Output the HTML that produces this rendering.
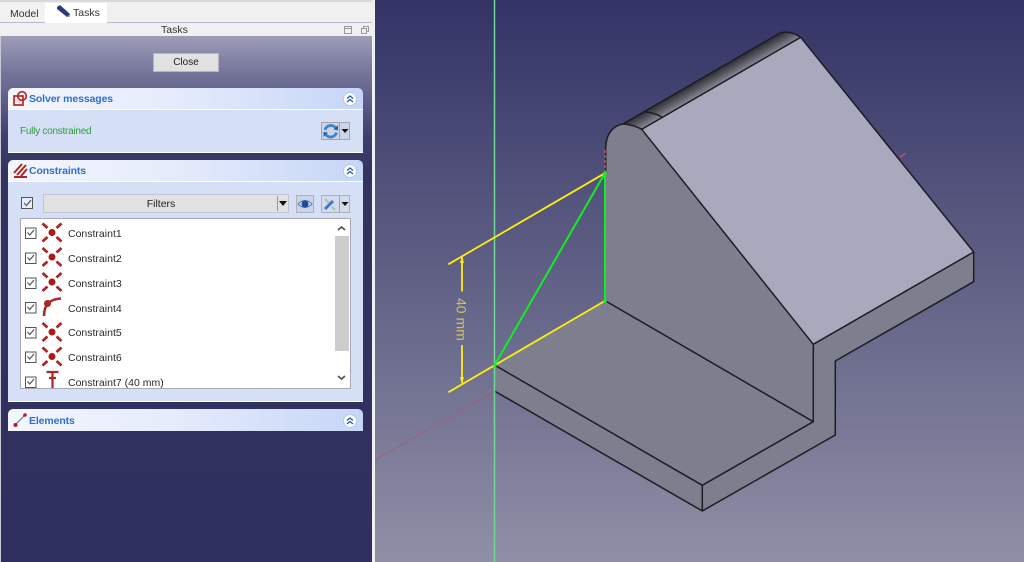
<!DOCTYPE html>
<html><head><meta charset="utf-8"><style>
html,body{margin:0;padding:0}
body{width:1024px;height:562px;overflow:hidden;position:relative;background:#fff;font-family:"Liberation Sans",sans-serif;font-size:10.5px;color:#222}
.a{position:absolute}
.hd{position:absolute;left:8px;width:355px;height:21px;border-radius:5px 5px 0 0;background:linear-gradient(90deg,#f4f6fd 0%,#e6ecfb 45%,#c6d6f7 100%);}
.hd b{position:absolute;left:21px;top:5px;font-size:10.5px;color:#2f6fd0;letter-spacing:-.12px;white-space:nowrap}
.bd{position:absolute;left:8px;width:355px;background:#d5dff6;border-top:1px solid #fff;border-bottom:1px solid #fff;box-sizing:border-box}
.c{position:absolute;width:20px;height:20px;right:3px;top:1px}
.t{position:absolute;left:68px;white-space:nowrap;color:#2a2a2a}
</style></head><body>
<div class="a" style="left:0;top:0;width:1024px;height:2px;background:#d8d8d8"></div>
<!-- left dock -->
<div class="a" style="left:0;top:2px;width:372px;height:34px;background:#f0f0f0"></div>
<div class="a" style="left:0;top:22px;width:372px;height:1px;background:#b8b8d0"></div>
<div class="a" style="left:1px;top:4px;width:44px;height:18px;background:#f2f2f2;border-right:1px solid #c8c8d8"></div>
<div class="a" style="left:45px;top:3px;width:62px;height:20px;background:#fff"></div>
<div class="a" style="left:10px;top:8px;font-size:10.5px;color:#333">Model</div>
<div class="a" style="left:73px;top:7px;font-size:10.5px;color:#333">Tasks</div>
<svg class="a" style="left:56px;top:4px" width="16" height="16"><path d="M1 3 L4 1 L14 10 L14 13 L11 13 L1 5Z" fill="#2c3a78"/><path d="M11 13 L14 13 L14 10Z" fill="#aab"/></svg>
<div class="a" style="left:161px;top:24px;font-size:10.5px;color:#333">Tasks</div>
<svg class="a" style="left:343px;top:25px" width="28" height="11" fill="none" stroke="#9a9a9a"><rect x="1.500" y="1.500" width="7" height="7"/><path d="M1.500 3.500H8.500"/><rect x="18.500" y="3.500" width="5" height="5"/><path d="M20.500 3.500V1.500H25.500V6.500H23.500"/></svg>
<!-- panel -->
<div class="a" style="left:0;top:36px;width:372px;height:526px;background:linear-gradient(180deg,#9d9db9 0%,#75759a 7%,#565682 14%,#3f3f6e 19%,#333360 26%,#303060 100%)"></div>
<div class="a" style="left:0;top:36px;width:1px;height:526px;background:#c8c8d8"></div>
<div class="a" style="left:372px;top:0;width:3px;height:562px;background:#f0f0f0"></div>
<div class="a" style="left:154px;top:54px;width:64px;height:17px;background:#e1e1e1;text-align:center;line-height:18px;font-size:10px;color:#222;box-shadow:0 0 0 1px #b4b4c8">Close</div>

<!-- solver -->
<div class="hd" style="top:88px"><b>Solver messages</b>
<svg class="c" viewBox="0 0 20 20"><circle cx="10" cy="10" r="6.500" fill="#fff" stroke="#b8c8e8"/><path d="M7 9.500 10 7 13 9.500M7 13 10 10.500 13 13" fill="none" stroke="#2a5fb8" stroke-width="1.400"/></svg></div>
<svg class="a" style="left:12px;top:90px" width="17" height="17" fill="none" stroke="#b52a2a" stroke-width="1.700"><rect x="2" y="6" width="9" height="9" fill="#f8e8ea"/><circle cx="10" cy="6" r="4.300"/></svg>
<div class="bd" style="top:109px;height:44px"></div>
<div class="a" style="left:20px;top:126px;color:#2c9e3c;font-size:10px;letter-spacing:-.25px;white-space:nowrap">Fully constrained</div>
<div class="a" style="left:321px;top:122px;width:29px;height:18px;background:#ccd5e8;box-shadow:inset 0 0 0 1px #a4a4b0"></div>
<svg class="a" style="left:321px;top:122px" width="29" height="18" fill="none"><path d="M4 8 A6 6 0 0 1 15 6.500" stroke="#3f82c8" stroke-width="2.800"/><path d="M15.500 10.500 A6 6 0 0 1 4.500 12" stroke="#3f82c8" stroke-width="2.800"/><path d="M12.500 7.500 17 3 17 8.500Z" fill="#2a62a8"/><path d="M7 10.500 2.500 15 2.500 10Z" fill="#2a62a8"/><path d="M18.500 1V17" stroke="#a0a0a8"/><path d="M20.500 7H27.500L24 11Z" fill="#111"/></svg>

<!-- constraints -->
<div class="hd" style="top:160px"><b>Constraints</b>
<svg class="c" viewBox="0 0 20 20"><circle cx="10" cy="10" r="6.500" fill="#fff" stroke="#b8c8e8"/><path d="M7 9.500 10 7 13 9.500M7 13 10 10.500 13 13" fill="none" stroke="#2a5fb8" stroke-width="1.400"/></svg></div>
<svg class="a" style="left:12px;top:162px" width="17" height="17" fill="none" stroke="#a82828" stroke-width="2"><path d="M2 11 10 2M5 13 14 3M2 15H15M9 14 15 7"/></svg>
<div class="bd" style="top:181px;height:221px"></div>
<div class="a" style="left:21px;top:197px;width:10px;height:10px;border:1px solid #555;background:#e6ecf8"></div>
<svg class="a" style="left:21px;top:197px" width="12" height="12" fill="none" stroke="#555" stroke-width="1.200"><path d="M3 6 5.500 8.500 10 3"/></svg>
<div class="a" style="left:44px;top:195px;width:244px;height:17px;background:#e1e1e1;box-shadow:0 0 0 1px #c0c4d4;text-align:center;line-height:18px;color:#222;font-size:10.5px"><span style="margin-right:10px">Filters</span></div>
<div class="a" style="left:277px;top:196px;width:1px;height:15px;background:#999"></div>
<svg class="a" style="left:279px;top:201px" width="8" height="6"><path d="M0 0H8L4 5Z" fill="#111"/></svg>
<div class="a" style="left:296px;top:195px;width:18px;height:18px;background:#ccd5e8;box-shadow:inset 0 0 0 1px #b0b0bc"></div>
<svg class="a" style="left:296px;top:195px" width="18" height="18"><path d="M2 9Q9 2 16 9Q9 16 2 9Z" fill="#cfe0f4" stroke="#4f7cb0"/><circle cx="9" cy="9" r="3.500" fill="#23489a"/></svg>
<div class="a" style="left:321px;top:195px;width:29px;height:18px;background:#d3dbec;box-shadow:inset 0 0 0 1px #b0b0bc"></div>
<svg class="a" style="left:321px;top:195px" width="29" height="18" fill="none"><path d="M4 14 12 6" stroke="#3e78c4" stroke-width="3"/><path d="M4 4 8 8M11 12 14 15" stroke="#b8bcc8" stroke-width="2.400"/><path d="M18.500 1V17" stroke="#a0a0a8"/><path d="M20.500 7H27.500L24 11Z" fill="#111"/></svg>

<!-- list -->
<div class="a" style="left:21px;top:219px;width:329px;height:169px;background:#fff;box-shadow:0 0 0 1px #a8a8b8;overflow:hidden">
<div class="a" style="left:314px;top:17px;width:14px;height:115px;background:#cdcdcd"></div>
<svg class="a" style="left:313px;top:4px" width="15" height="160" fill="none" stroke="#555" stroke-width="1.800"><path d="M4 7 7.500 4 11 7M4 153 7.500 156 11 153"/></svg>
</div>
<svg class="a" style="left:0;top:219px;overflow:hidden" width="350" height="169" viewBox="0 219 350 169">
<defs><g id="x"><path d="M-9.500-9-4.500-4.500M9.500-9 4.500-4.500M-9.500 9-4.500 4.500M9.500 9 4.500 4.500" stroke="#a82828" stroke-width="2.800" fill="none"/><circle r="3.500" fill="#b01818"/></g>
<g id="k"><rect x="-5" y="-5" width="10.500" height="10.500" fill="#fff" stroke="#555"/><path d="M-3-.5-.7 2 3.500-3" fill="none" stroke="#555" stroke-width="1.200"/></g></defs>
<use href="#k" x="30.500" y="233"/><use href="#x" x="52" y="232.500"/>
<use href="#k" x="30.500" y="258"/><use href="#x" x="52" y="257"/>
<use href="#k" x="30.500" y="283"/><use href="#x" x="52" y="282"/>
<use href="#k" x="30.500" y="307.500"/><path d="M44 316C44 304 50 299 61 298.500" stroke="#a82828" stroke-width="2.600" fill="none"/><circle cx="47.500" cy="303.500" r="3.500" fill="#a82828"/>
<use href="#k" x="30.500" y="332.500"/><use href="#x" x="52" y="332"/>
<use href="#k" x="30.500" y="357"/><use href="#x" x="52" y="356.500"/>
<use href="#k" x="30.500" y="382"/><path d="M46.500 372H58.500M52.500 372V388M49 378H56" stroke="#a82828" stroke-width="2.200" fill="none"/>
</svg>
<div class="t" style="top:228px">Constraint1</div>
<div class="t" style="top:253px">Constraint2</div>
<div class="t" style="top:278px">Constraint3</div>
<div class="t" style="top:303px">Constraint4</div>
<div class="t" style="top:327px">Constraint5</div>
<div class="t" style="top:352px">Constraint6</div>
<div class="t" style="top:377px;height:11px;overflow:hidden">Constraint7 (40 mm)</div>

<!-- elements -->
<div class="hd" style="top:409px;height:22px"><b style="top:6px">Elements</b>
<svg class="c" style="top:2px" viewBox="0 0 20 20"><circle cx="10" cy="10" r="6.500" fill="#fff" stroke="#b8c8e8"/><path d="M7 9.500 10 7 13 9.500M7 13 10 10.500 13 13" fill="none" stroke="#2a5fb8" stroke-width="1.400"/></svg></div>
<svg class="a" style="left:12px;top:411px" width="16" height="18"><path d="M3 14 13 4" stroke="#8a8aa0" stroke-width="1.500"/><circle cx="3.500" cy="14" r="2" fill="#b02020"/><circle cx="13" cy="4" r="1.800" fill="#b02020"/></svg>

<!-- 3D view -->
<svg class="a" style="left:375px;top:0" width="649" height="562" viewBox="375 0 649 562">
<defs>
<linearGradient id="bg" x1="0" y1="0" x2="0" y2="1"><stop offset="0" stop-color="#333366"/><stop offset="1" stop-color="#8f8fa6"/></linearGradient>
<linearGradient id="rl" gradientUnits="userSpaceOnUse" x1="700" y1="79.400" x2="707" y2="91.600"><stop offset="0" stop-color="#2e2e36"/><stop offset=".45" stop-color="#55555f"/><stop offset="1" stop-color="#8a8a96"/></linearGradient>
</defs>
<rect x="375" y="0" width="649" height="562" fill="url(#bg)"/>
<!-- red axis -->
<path d="M375 460 494 392" stroke="#c05060" stroke-width="1" stroke-dasharray="3 1"/>
<path d="M900 157 906 153" stroke="#c05060" stroke-width="1.500"/>
<!-- roller -->
<path d="M623 124 780 33Q790 30 800.700 37.300L641.700 129.300Q634 125 623 124Z" fill="url(#rl)"/>
<!-- side face -->
<path d="M605.700 147Q607 127 623 124Q634 125 641.700 129.300L813.300 344.300V421.700L605.700 301Z" fill="#7e7f8e"/>
<!-- floor -->
<path d="M605.700 301 494.500 365 702.300 485.300 813.300 421.700Z" fill="#7e7f8e"/>
<!-- front band -->
<path d="M494.500 365V391L702.300 511V485.300Z" fill="#7e7f8e"/>
<path d="M702.300 485.300V511L835.300 435 813.300 421.700Z" fill="#7e7f8e"/>
<path d="M813.300 344.300 973.700 252V281.700L835.300 361V435L813.300 421.700Z" fill="#7e7f8e"/>
<!-- top face -->
<path d="M800.700 37.300 973.700 252 813.300 344.300 641.700 129.300Z" fill="#a9a9be"/>
<!-- edges -->
<g fill="none" stroke="#1c1c22" stroke-width="1.500" stroke-linejoin="round">
<path d="M605.700 173V147Q607 127 623 124L780 33Q790 30 800.700 37.300L973.700 252V281.700L835.300 361V435L702.300 511 494.500 391"/>
<path d="M623 124Q634 125 641.700 129.300L800.700 37.300"/>
<path d="M643 112Q654 112 661.700 117"/>
<path d="M641.700 129.300 813.300 344.300 973.700 252"/>
<path d="M813.300 344.300V421.700L605.700 301"/>
<path d="M813.300 421.700 702.300 485.300 494.500 365"/>
<path d="M702.300 485.300V511"/>
</g>
<!-- axis green -->
<path d="M494.500 0V562" stroke="#6fd89a" stroke-width="1.500"/>
<path d="M605 150V172" stroke="#c05060" stroke-width="1.500" stroke-dasharray="3 2"/>
<!-- sketch -->
<g fill="none">
<path d="M448.300 264.300 604.700 173.300M448.300 392.300 604.700 301" stroke="#ffee11" stroke-width="1.800"/>
<path d="M462 257V291.500M462 345V383" stroke="#ffee11" stroke-width="1.800"/>
<path d="M605 173V301M494.700 365 605 173" stroke="#11ee22" stroke-width="2"/>
</g>
<path d="M462 256 460 263H464ZM462 384 460 377H464Z" fill="#ffee11"/>
<circle cx="605" cy="173" r="1.800" fill="#11ee22"/><circle cx="605" cy="301" r="1.800" fill="#11ee22"/><circle cx="495" cy="365" r="1.800" fill="#11ee22"/>
<text x="0" y="0" transform="translate(456.500 298) rotate(90)" font-family="Liberation Sans" font-size="14" fill="#cfc45a">40 mm</text>
</svg>
</body></html>
